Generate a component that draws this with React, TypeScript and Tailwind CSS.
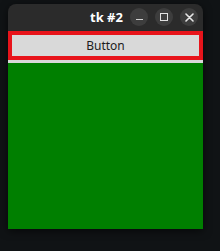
import React from "react";

export default function App() {
  return (
    <div className="w-[220px] h-[251px] bg-[#101315] pt-[4px] pl-[8px]" style={{ fontFamily: '"Noto Sans", "Liberation Sans", sans-serif' }}>
      <div className="w-[195px] h-[225px] flex flex-col rounded-t-[8px] overflow-hidden shadow-[0_2px_8px_rgba(0,0,0,0.6)]">
        <div className="h-[27px] bg-[#2b2b2b] relative flex items-center justify-center shrink-0">
          <span className="text-[13px] font-bold text-white leading-none pl-[2px]">tk #2</span>
          <div className="absolute right-[5px] top-[4px] flex gap-[7px]">
            <div className="w-[18px] h-[18px] rounded-full bg-[#3d3d3d] flex items-center justify-center">
              <div className="w-[7px] h-[1.5px] bg-[#d0d0d0] mt-[5px]" />
            </div>
            <div className="w-[18px] h-[18px] rounded-full bg-[#3d3d3d] flex items-center justify-center">
              <div className="w-[8px] h-[8px] border-[1.5px] border-[#e0e0e0]" />
            </div>
            <div className="w-[18px] h-[18px] rounded-full bg-[#3d3d3d] flex items-center justify-center">
              <svg width="9" height="9" viewBox="0 0 9 9">
                <path d="M1 1 L8 8 M8 1 L1 8" stroke="#e6e6e6" strokeWidth="1.6" strokeLinecap="round" />
              </svg>
            </div>
          </div>
        </div>
        <div className="border-[4px] border-[#e8141b] bg-[#d9d9d9] h-[29px] flex items-center justify-center shrink-0">
          <span className="text-[12px] text-[#1c1c1c] leading-none">Button</span>
        </div>
        <div className="h-[3px] bg-[#d9d9d9] shrink-0" />
        <div className="flex-1 bg-[#007f00]" />
      </div>
    </div>
  );
}
